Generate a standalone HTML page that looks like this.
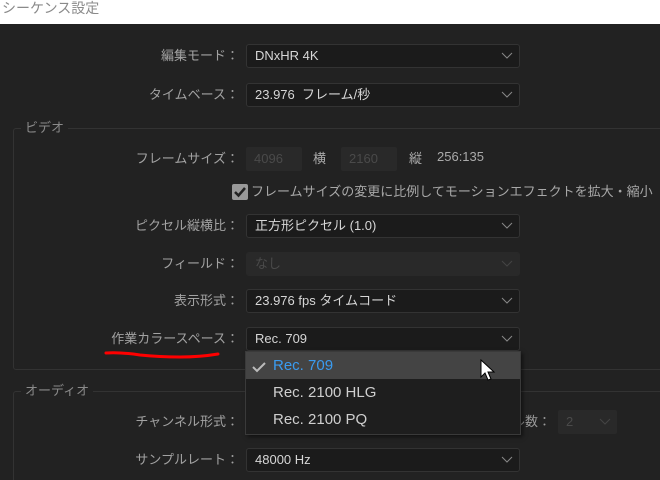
<!DOCTYPE html>
<html style="width:660px;height:480px;overflow:hidden"><head><meta charset="utf-8"><style>
*{margin:0;padding:0;box-sizing:border-box}
body{width:660px;height:480px;overflow:hidden;background:#222222;font-family:"Liberation Sans","Noto Sans CJK JP",sans-serif;position:relative}
.t{position:absolute;left:0;top:0;width:660px;height:24px;background:#fff;color:#8a8a8a;font-size:14px;padding:0 0 0 2px;line-height:17px}
.lab{position:absolute;right:421px;font-size:13px;color:#a2a2a2;white-space:nowrap;height:24px;line-height:24px}
.sel{position:absolute;left:246px;width:274px;height:24px;background:#1b1b1b;border:1px solid #333;border-radius:3px;color:#d6d6d6;font-size:13px;line-height:22px;padding-left:8px}
.sel.d{background:#292929;border-color:#292929;color:#4a4a4a}
.chev{position:absolute;right:6px;top:7px}
.grp{position:absolute;left:13px;width:660px;border:1px solid #333;border-radius:3px}
.gl{position:absolute;font-size:13px;color:#8a8a8a;background:#222;padding:0 4px;top:-9px;left:7px;line-height:16px}
.box{position:absolute;height:24px;background:#292929;border-radius:2px;color:#4a4a4a;font-size:13px;line-height:24px;padding-left:8px}
.txt{position:absolute;font-size:13px;color:#aaa;line-height:24px;white-space:nowrap}
.dd{position:absolute;left:245px;top:351px;width:276px;height:84px;background:#1e1e1e;border:1px solid #3a3a3a;box-shadow:2px 2px 4px rgba(0,0,0,.5)}
.it{position:absolute;left:0;width:274px;height:27px;line-height:27px;padding-left:27px;font-size:15px;color:#cfcfcf}
</style></head><body>
<div class="t">シーケンス設定</div>

<div class="lab" style="top:44px">編集モード：</div>
<div class="sel" style="top:44px">DNxHR 4K<svg class="chev" width="12" height="8"><path d="M1 1l5 5 5-5" stroke="#888" fill="none" stroke-width="1"/></svg></div>
<div class="lab" style="top:83px">タイムベース：</div>
<div class="sel" style="top:83px">23.976&nbsp; フレーム/秒<svg class="chev" width="12" height="8"><path d="M1 1l5 5 5-5" stroke="#888" fill="none" stroke-width="1"/></svg></div>

<div class="grp" style="top:128px;height:242px"><span class="gl">ビデオ</span></div>
<div class="grp" style="top:391px;height:100px;border-bottom:none"><span class="gl">オーディオ</span></div>

<div class="lab" style="top:147px">フレームサイズ：</div>
<div class="box" style="left:246px;top:147px;width:56px">4096</div>
<div class="txt" style="left:313px;top:147px">横</div>
<div class="box" style="left:341px;top:147px;width:56px">2160</div>
<div class="txt" style="left:409px;top:147px">縦</div>
<div class="txt" style="left:437px;top:145px">256:135</div>

<div style="position:absolute;left:232px;top:184px;width:16px;height:16px;background:#999;border-radius:2px"><svg width="16" height="16"><path d="M3 8l3.5 3.5L13 4" stroke="#222" stroke-width="2.5" fill="none"/></svg></div>
<div class="txt" style="left:251px;top:180px;color:#a8a8a8">フレームサイズの変更に比例してモーションエフェクトを拡大・縮小</div>

<div class="lab" style="top:214px">ピクセル縦横比：</div>
<div class="sel" style="top:214px">正方形ピクセル (1.0)<svg class="chev" width="12" height="8"><path d="M1 1l5 5 5-5" stroke="#888" fill="none" stroke-width="1"/></svg></div>
<div class="lab" style="top:252px">フィールド：</div>
<div class="sel d" style="top:252px">なし<svg class="chev" width="12" height="8"><path d="M1 1l5 5 5-5" stroke="#444" fill="none" stroke-width="1"/></svg></div>
<div class="lab" style="top:289px">表示形式：</div>
<div class="sel" style="top:289px">23.976 fps タイムコード<svg class="chev" width="12" height="8"><path d="M1 1l5 5 5-5" stroke="#888" fill="none" stroke-width="1"/></svg></div>
<div class="lab" style="top:327px">作業カラースペース：</div>
<div class="sel" style="top:327px">Rec. 709<svg class="chev" width="12" height="8"><path d="M1 1l5 5 5-5" stroke="#888" fill="none" stroke-width="1"/></svg></div>
<svg style="position:absolute;left:100px;top:348px" width="130" height="16"><path d="M6 5 Q20 4 40 7 Q60 9 80 9 Q100 9 118 6" stroke="#f00" stroke-width="3" fill="none" stroke-linecap="round"/></svg>

<div class="lab" style="top:410px">チャンネル形式：</div>
<div class="txt" style="left:512px;top:410px;color:#9a9a9a">ル数：</div>
<div class="box" style="left:558px;top:410px;width:59px">2<svg style="position:absolute;right:6px;top:8px" width="12" height="8"><path d="M1 1l5 5 5-5" stroke="#444" fill="none" stroke-width="1"/></svg></div>
<div class="lab" style="top:448px">サンプルレート：</div>
<div class="sel" style="top:448px">48000 Hz<svg class="chev" width="12" height="8"><path d="M1 1l5 5 5-5" stroke="#888" fill="none" stroke-width="1"/></svg></div>

<div class="dd">
<div class="it" style="top:0;background:#444;color:#3a9bf0"><svg style="position:absolute;left:6px;top:9px" width="14" height="12"><path d="M1 6l4 4 8-8" stroke="#bbb" stroke-width="2" fill="none"/></svg>Rec. 709</div>
<div class="it" style="top:27px">Rec. 2100 HLG</div>
<div class="it" style="top:54px">Rec. 2100 PQ</div>
</div>
<svg style="position:absolute;left:480px;top:359px" width="16" height="24"><path d="M1 1v17l4-4 3 7 3-1-3-7h6z" fill="#fff" stroke="#000" stroke-width="1"/></svg>
</body></html>
